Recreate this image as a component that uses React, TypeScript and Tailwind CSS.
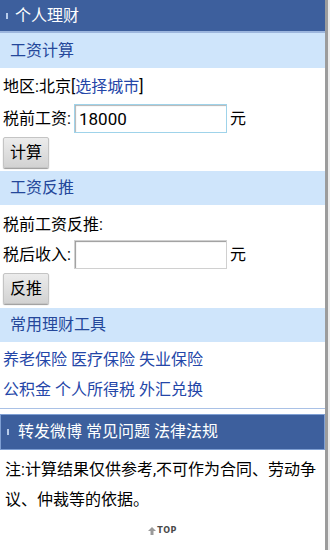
import React from "react";

const font = { fontFamily: "Roboto, 'Noto Sans CJK SC', sans-serif" };

function Section({ title }: { title: string }) {
  return (
    <div className="flex h-[34px] items-center bg-[#cfe5fb] pl-[10px] text-[16px] text-[#24479a]">
      {title}
    </div>
  );
}

function Field({ label, value, focused }: { label: string; value: string; focused?: boolean }) {
  return (
    <div className="flex h-[29px] items-center">
      <span className="w-[71px] whitespace-nowrap">{label}</span>
      <input
        readOnly
        value={value}
        className={`h-[29px] w-[153px] border bg-white pl-[4px] text-[17px] text-black outline-none ${
          focused
            ? "border-[#9fd3ea] shadow-[inset_1px_1px_1px_#b5b5b5]"
            : "border-[#d0d0d0] shadow-[inset_1px_1px_1px_#9a9a9a]"
        }`}
      />
      <span className="ml-[3px]">元</span>
    </div>
  );
}

function GrayButton({ label }: { label: string }) {
  return (
    <button className="ml-[3px] h-[31px] w-[46px] rounded-[2px] border border-[#c4c4c4] bg-gradient-to-b from-[#ececec] to-[#d2d2d2] text-[16px] text-black shadow-[0_1px_1px_#999]">
      {label}
    </button>
  );
}

export default function App() {
  return (
    <div className="flex h-[550px] w-[330px] overflow-hidden bg-white text-[16px] text-black" style={font}>
      <div className="w-[325px]">
        <div className="flex h-[33px] items-center border-b-2 border-[#9db6dd] bg-[#3d5f9d] pl-[6px] text-white">
          <span className="mr-[7px] h-[6px] w-[2px] bg-[#b7cbea]" />
          <span className="text-[16px]">个人理财</span>
        </div>

        <div className="h-[35px] bg-[#cfe5fb] pl-[10px] leading-[35px] text-[#24479a]">工资计算</div>
        <div className="px-[3px]">
          <div className="mt-[8px] h-[21px] leading-[21px]">
            地区:北京[<span className="text-[#2446a8]">选择城市</span>]
          </div>
          <div className="mt-[7px]">
            <Field label="税前工资:" value="18000" focused />
          </div>
        </div>
        <div className="mt-[4px] mb-[3px]">
          <GrayButton label="计算" />
        </div>

        <Section title="工资反推" />
        <div className="px-[3px]">
          <div className="mt-[9px] h-[21px] leading-[21px]">税前工资反推:</div>
          <div className="mt-[5px]">
            <Field label="税后收入:" value="" />
          </div>
        </div>
        <div className="mt-[4px] mb-[4px]">
          <GrayButton label="反推" />
        </div>

        <Section title="常用理财工具" />
        <div className="pt-[3px] pl-[3px] leading-[30px] text-[#2446a8]">
          <div>养老保险 医疗保险 失业保险</div>
          <div>公积金 个人所得税 外汇兑换</div>
        </div>

        <div className="mt-[3px] h-[1px] bg-[#a9c1e6]" />
        <div className="mt-[5px] flex h-[36px] items-center border border-[#7f9fd3] bg-[#3d5f9d] pl-[6px] text-white">
          <span className="mr-[9px] h-[6px] w-[2px] bg-[#b7cbea]" />
          <span>转发微博 常见问题 法律法规</span>
        </div>

        <div className="pl-[5px] pr-[1px] pt-[5px] text-[16px] leading-[30px]">
          注:计算结果仅供参考,不可作为合同、劳动争议、仲裁等的依据。
        </div>

        <div className="mt-[12px] flex items-center justify-center gap-[1px] text-[#4a4a4a]">
          <svg width="8" height="8" viewBox="0 0 8 8">
            <path d="M4 0 L8 4 L5.5 4 L5.5 8 L2.5 8 L2.5 4 L0 4 Z" fill="#9a9a9a" />
          </svg>
          <span className="text-[8px] font-bold leading-[8px] tracking-[0.5px]" style={{ fontFamily: "'DejaVu Sans', sans-serif" }}>
            TOP
          </span>
        </div>
      </div>
      <div className="w-[3px] bg-[#9c9c9c]" />
      <div className="w-[2px] bg-[#ececec]" />
    </div>
  );
}
